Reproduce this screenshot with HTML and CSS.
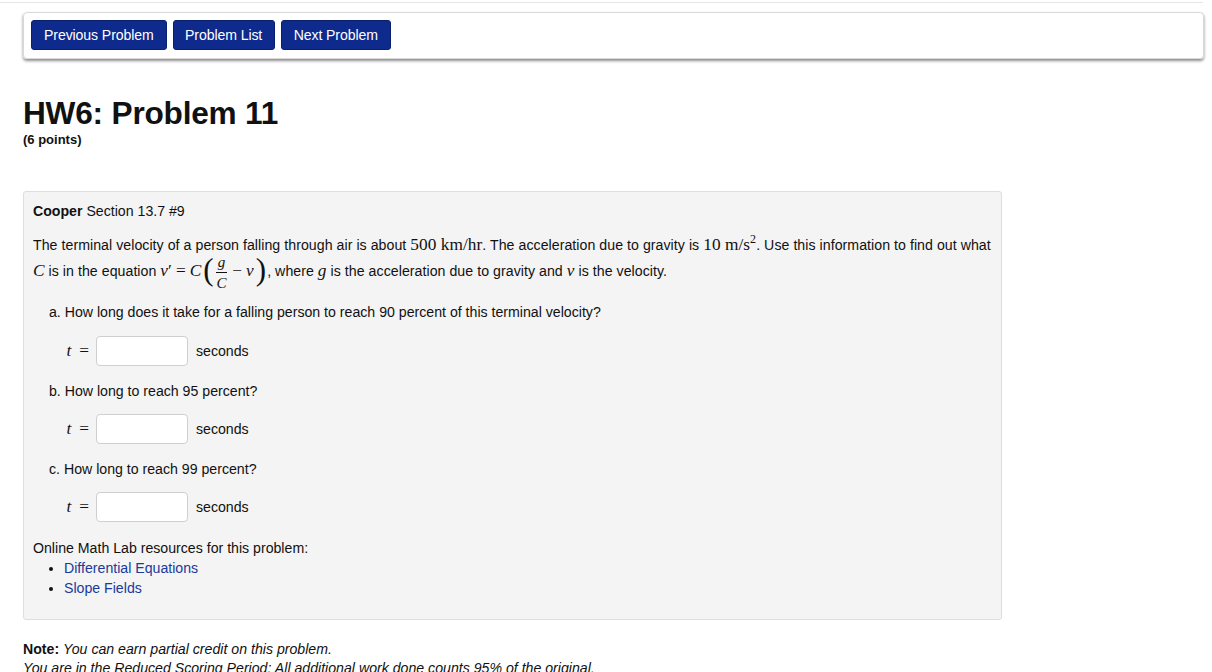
FILE: index.html
```html
<!DOCTYPE html>
<html>
<head>
<meta charset="utf-8">
<link rel="stylesheet" href="styles.css">
</head>
<body>
<div class="topline"></div>
<div class="page">
  <div class="navbox">
    <a class="btn">Previous Problem</a>
    <a class="btn btn-list">Problem List</a>
    <a class="btn">Next Problem</a>
  </div>
  <h1 class="title">HW6: Problem 11</h1>
  <div class="points">(6 points)</div>

  <div class="problem">
    <p class="source"><b>Cooper</b> Section 13.7 #9</p>
    <p class="intro">The terminal velocity of a person falling through air is about <span class="m">500&nbsp;<span class="r">km</span>/<span class="r">hr</span></span>. The acceleration due to gravity is <span class="m">10&nbsp;<span class="r">m</span>/<span class="r">s</span><sup>2</sup></span>. Use this information to find out what<br><span class="m i">C</span> is in the equation <span class="m"><i>v</i>&prime;<span class="op">=</span><i>C</i><span class="paren">(</span><span class="frac"><span class="num"><i>g</i></span><span class="den"><i>C</i></span></span><span class="op">&minus;</span><i>v</i><span class="paren">)</span></span>, where <span class="m i">g</span> is the acceleration due to gravity and <span class="m i">v</span> is the velocity.</p>

    <div class="part">
      <p class="q">a. How long does it take for a falling person to reach 90 percent of this terminal velocity?</p>
      <div class="ansrow"><span class="m lbl"><i>t</i><span class="op">=</span></span><span class="input"></span><span class="unit">seconds</span></div>
    </div>
    <div class="part">
      <p class="q">b. How long to reach 95 percent?</p>
      <div class="ansrow"><span class="m lbl"><i>t</i><span class="op">=</span></span><span class="input"></span><span class="unit">seconds</span></div>
    </div>
    <div class="part">
      <p class="q">c. How long to reach 99 percent?</p>
      <div class="ansrow"><span class="m lbl"><i>t</i><span class="op">=</span></span><span class="input"></span><span class="unit">seconds</span></div>
    </div>

    <p class="res">Online Math Lab resources for this problem:</p>
    <ul class="links">
      <li><a>Differential Equations</a></li>
      <li><a>Slope Fields</a></li>
    </ul>
  </div>

  <p class="note"><b>Note:</b> <i>You can earn partial credit on this problem.</i><br><i>You are in the Reduced Scoring Period: All additional work done counts 95% of the original.</i></p>
</div>
</body>
</html>
```
FILE: styles.css
```css
html, body { margin: 0; padding: 0; background: #fff; }
body { font-family: "Liberation Sans", Arial, sans-serif; font-size: 14.15px; color: #111; overflow: hidden; height: 672px; }
.topline { height: 2px; border-bottom: 1px solid #e6e6e6; width: 1203px; }
.page { padding: 0 0 0 23px; }
.navbox {
  margin-top: 9px;
  width: 1164px;
  height: 30px;
  padding: 7px 8px 8px 7px;
  border: 1px solid #d8d8d8;
  border-radius: 4px;
  box-shadow: 0 2px 3px rgba(0,0,0,0.45);
  display: flex;
  gap: 6px;
}
.btn {
  display: inline-flex; align-items: center; justify-content: center;
  box-sizing: border-box;
  height: 30px; padding: 0 12px;
  background: #0e2a8c; color: #fff;
  border: 1px solid #0a1f6b; border-radius: 3px;
  font-size: 14.1px; letter-spacing: -0.1px;
}
.btn-list { width: 102px; padding: 0; }
.title { font-size: 31.6px; font-weight: bold; margin: 36px 0 0 0; line-height: 36px; letter-spacing: -0.2px; }
.points { font-size: 13px; font-weight: bold; margin-top: 1px; }
.problem {
  margin-top: 44px;
  width: 958px;
  background: #f4f4f4;
  border: 1px solid #dedede;
  border-radius: 3px;
  padding: 9px 10px 21px 9px;
}
p { margin: 0; }
.source { line-height: 20px; }
.intro { margin-top: 11px; line-height: 26px; letter-spacing: 0.05px; }
.m { font-family: "Liberation Serif", "Times New Roman", serif; font-size: 17.3px; }
.m.i, .m i { font-style: italic; }
.r { font-style: normal; }
.op { font-style: normal; margin: 0 4px; }
sup { font-size: 12px; line-height: 0; vertical-align: 7px; }
.paren { font-size: 31px; font-style: normal; vertical-align: -4px; line-height: 0; display: inline-block; margin: 0 1px 0 2px; }
.frac {
  display: inline-flex; flex-direction: column; align-items: center;
  vertical-align: 9px; line-height: 14px; font-size: 15px;
  margin: -14px 1px;
}
.num { border-bottom: 1px solid #111; padding: 0 2px 3px; align-self: stretch; text-align: center; }
.den { padding-top: 3px; }
.part { padding-left: 16px; }
.q { margin-top: 18px; line-height: 20px; }
.part + .part .q { margin-top: 15px; }
.ansrow { display: flex; align-items: center; margin-top: 14px; height: 30px; }
.part + .part .ansrow { margin-top: 13px; }
.lbl { width: 73px; text-align: right; padding-right: 0; box-sizing: border-box; margin-left: -26px; }
.lbl .op { margin: 0 7px 0 8px; }
.input { width: 90px; height: 28px; background: #fff; border: 1px solid #cfcfcf; border-radius: 4px; }
.unit { margin-left: 8px; }
.res { margin-top: 16px; line-height: 20px; }
.links { margin: 0; padding-left: 31px; line-height: 20px; }
.links a { color: #1a3a9c; }
.note { margin-top: 20px; line-height: 19px; }
```
